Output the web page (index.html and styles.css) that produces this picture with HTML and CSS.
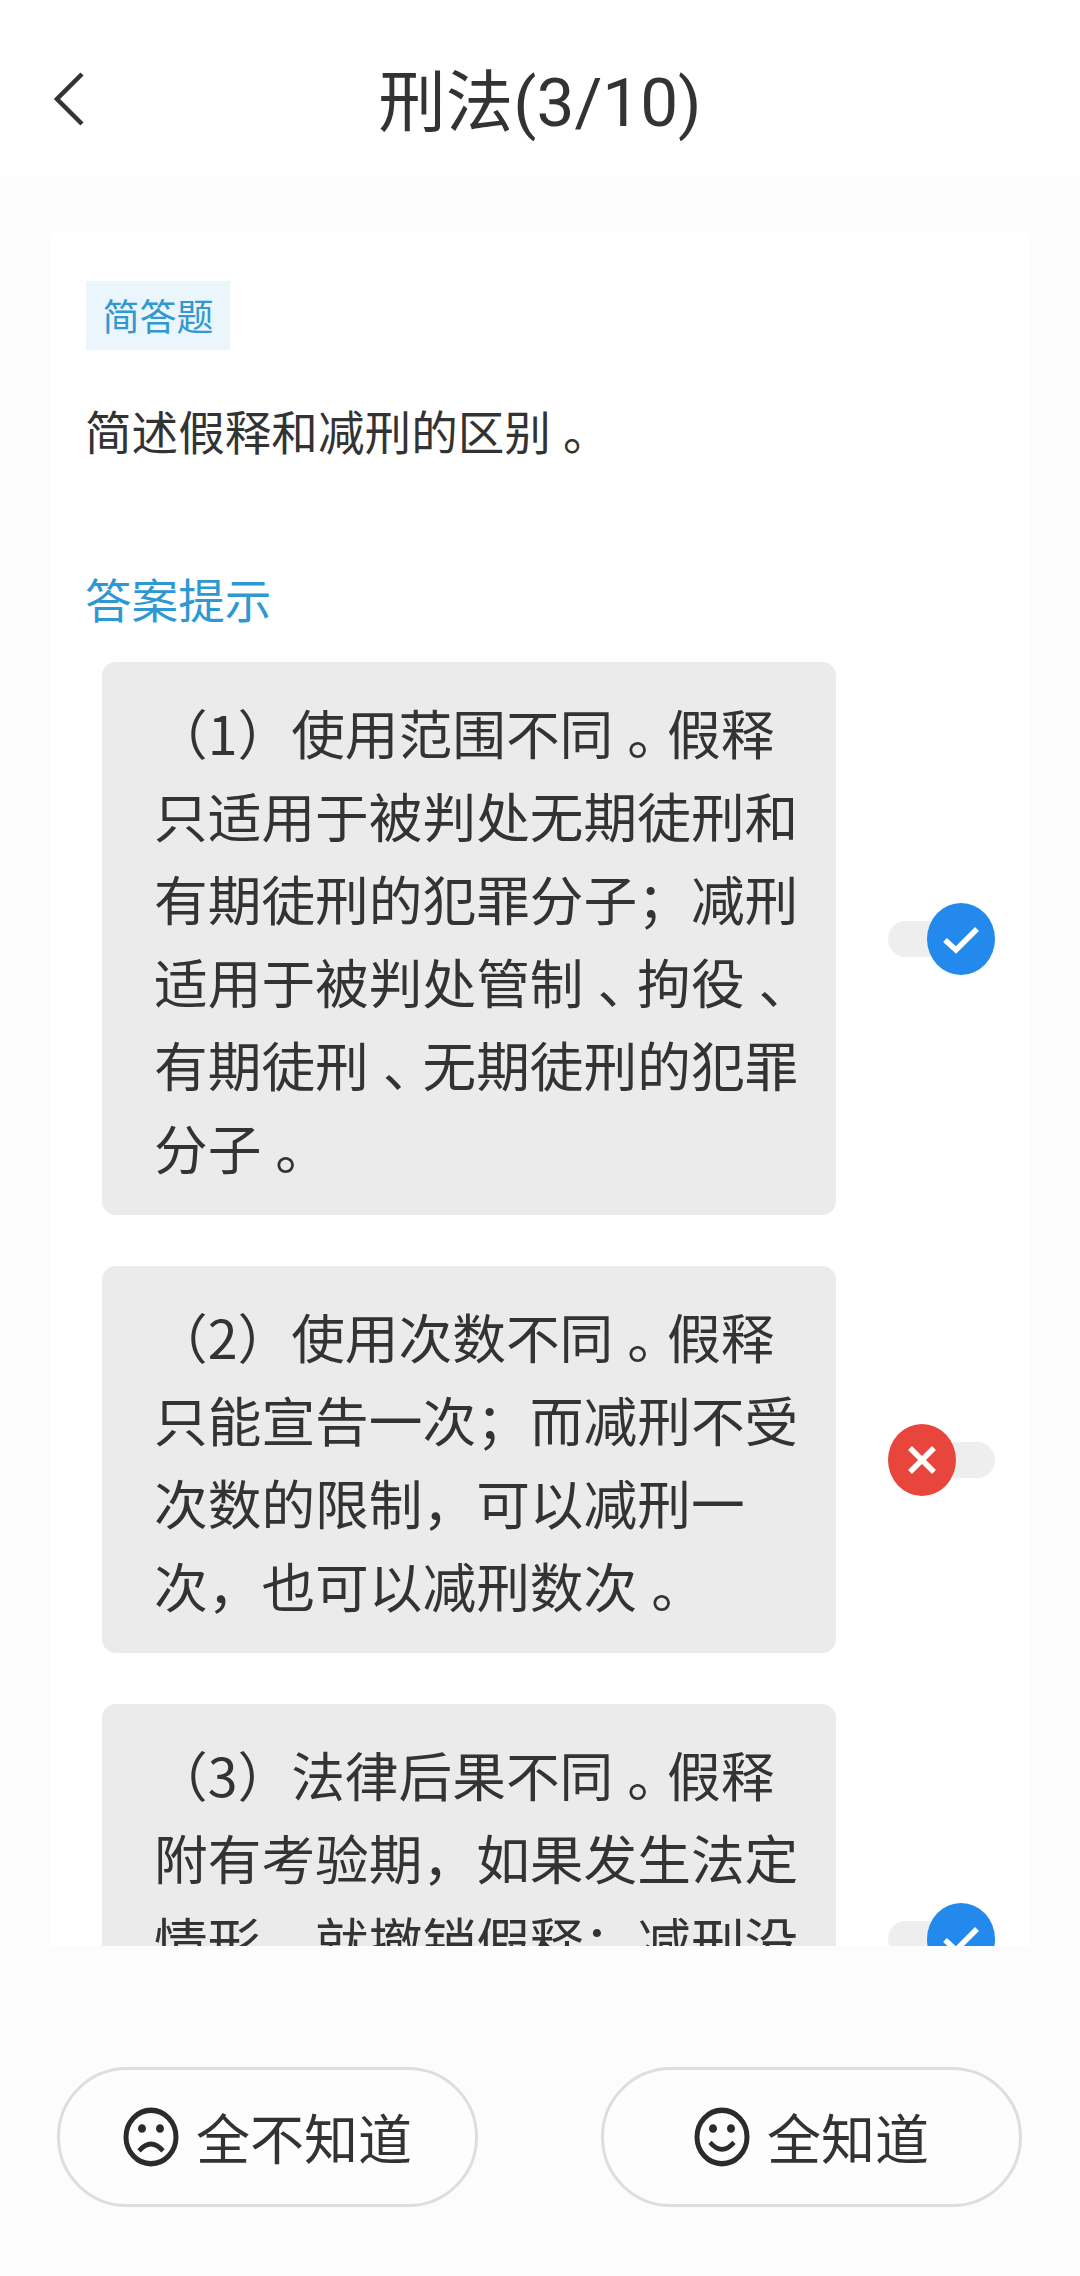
FILE: index.html
```html
<!DOCTYPE html>
<html lang="zh-CN">
<head>
<meta charset="utf-8">
<title>刑法(3/10)</title>
<link rel="stylesheet" href="styles.css">
</head>
<body>
<div class="page">
  <header class="topbar">
    <svg class="back" viewBox="0 0 30 54" aria-hidden="true"><path d="M28 2 L3 27 L28 52"/></svg>
    <h1 class="title">刑法(3/10)</h1>
  </header>
  <main class="scroll">
    <section class="card">
      <span class="tag">简答题</span>
      <p class="question">简述假释和减刑的区别<span class="mid">。</span></p>
      <h2 class="hint">答案提示</h2>
      <div class="row">
        <div class="block">（1）使用范围不同<span class="mid">。</span>假释只适用于被判处无期徒刑和有期徒刑的犯罪分子；减刑适用于被判处管制<span class="mid">、</span>拘役<span class="mid">、</span>有期徒刑<span class="mid">、</span>无期徒刑的犯罪分子<span class="mid">。</span></div>
        <div class="toggle">
          <span class="knob knob-on"><svg viewBox="0 0 40 40" aria-hidden="true"><path d="M4 21 L15 31 L36 10"/></svg></span>
        </div>
      </div>
      <div class="row">
        <div class="block">（2）使用次数不同<span class="mid">。</span>假释只能宣告一次；而减刑不受次数的限制，可以减刑一次，也可以减刑数次<span class="mid">。</span></div>
        <div class="toggle">
          <span class="knob knob-off"><svg viewBox="0 0 40 40" aria-hidden="true"><path d="M8 8 L32 32 M32 8 L8 32"/></svg></span>
        </div>
      </div>
      <div class="row">
        <div class="block">（3）法律后果不同<span class="mid">。</span>假释附有考验期，如果发生法定情形，就撤销假释；减刑没有考验期，减刑后不存在撤销减刑的问题<span class="mid">。</span></div>
        <div class="toggle">
          <span class="knob knob-on"><svg viewBox="0 0 40 40" aria-hidden="true"><path d="M4 21 L15 31 L36 10"/></svg></span>
        </div>
      </div>
    </section>
  </main>
  <footer class="actions">
    <button class="action" type="button">
      <svg class="face" viewBox="0 0 56 56" preserveAspectRatio="none" aria-hidden="true">
        <circle class="face-ring" cx="28" cy="28" r="25"/>
        <circle class="face-eye" cx="19" cy="20" r="4"/>
        <circle class="face-eye" cx="37" cy="20" r="4"/>
        <path class="face-mouth" d="M16 41 Q28 28 40 41"/>
      </svg>
      <span>全不知道</span>
    </button>
    <button class="action" type="button">
      <svg class="face" viewBox="0 0 56 56" preserveAspectRatio="none" aria-hidden="true">
        <circle class="face-ring" cx="28" cy="28" r="25"/>
        <circle class="face-eye" cx="19" cy="20" r="4"/>
        <circle class="face-eye" cx="37" cy="20" r="4"/>
        <path class="face-mouth" d="M16 33 Q28 46 40 33"/>
      </svg>
      <span>全知道</span>
    </button>
  </footer>
</div>
</body>
</html>
```

FILE: styles.css
```css
* { box-sizing: border-box; }
html, body { margin: 0; padding: 0; }
body {
  background: #fdfdfd;
  color: #333;
  font-family: "Noto Sans CJK SC", "Noto Sans", sans-serif;
}
.page {
  width: 1080px;
  height: 2276px;
  display: flex;
  flex-direction: column;
  overflow: hidden;
}
.topbar {
  position: relative;
  height: 177px;
  flex: none;
  background: #fff;
  display: flex;
  align-items: center;
  justify-content: center;
}
.back {
  position: absolute;
  left: 54px;
  top: 72px;
  width: 30px;
  height: 54px;
  fill: none;
  stroke: #333;
  stroke-width: 4.5;
}
.title {
  margin: 0;
  padding-top: 29px;
  font-family: Roboto, "Noto Sans CJK SC", sans-serif;
  font-size: 67.5px;
  font-weight: 400;
  line-height: 84px;
}
.scroll {
  flex: 1;
  min-height: 0;
  overflow: hidden;
  padding: 55px 50px 0;
}
.card {
  background: #fff;
  border-radius: 8px;
  padding: 49px 36px 40px 35px;
}
.tag {
  display: block;
  width: 144px;
  height: 69px;
  margin-left: 1px;
  background: #eaf5fc;
  color: #3199cf;
  font-size: 37px;
  line-height: 69px;
  text-align: center;
}
.question {
  margin: 41px 0 0;
  font-size: 46.6px;
  line-height: 78px;
}
.hint {
  margin: 90px 0 0;
  color: #2f98d3;
  font-size: 46.6px;
  font-weight: 400;
  line-height: 78px;
}
.mid {
  margin-left: 0.26em;
  letter-spacing: -0.26em;
}
.row {
  display: flex;
  align-items: center;
  gap: 52px;
  margin: 0 0 51px 17px;
}
.hint + .row { margin-top: 25px; }
.block {
  width: 734px;
  flex: none;
  background: #ebebeb;
  border-radius: 14px;
  padding: 28px 30px 27px 52px;
  font-size: 53.7px;
  line-height: 83px;
}
.toggle {
  position: relative;
  flex: none;
  width: 107px;
  height: 36px;
  background: #eeeeee;
  border-radius: 18px;
}
.knob {
  position: absolute;
  top: -18px;
  width: 68px;
  height: 72px;
  border-radius: 50%;
  display: flex;
  align-items: center;
  justify-content: center;
}
.knob svg {
  width: 40px;
  height: 40px;
  fill: none;
  stroke: #fff;
  stroke-width: 5.5;
}
.knob-on { right: 0; background: #2389ec; }
.knob-off { left: 0; background: #e8453c; }
.actions {
  flex: none;
  height: 330px;
  background: #fcfcfc;
  padding: 121px 58px 0 57px;
  display: flex;
  justify-content: space-between;
  align-items: flex-start;
}
.action {
  width: 421px;
  height: 140px;
  border: 3px solid #dedede;
  border-radius: 70px;
  background: #fdfdfd;
  color: #333;
  display: flex;
  align-items: center;
  justify-content: center;
  gap: 17px;
  font-family: inherit;
  font-size: 54px;
  line-height: 76px;
  padding: 0;
}
.face { width: 56px; height: 60px; flex: none; }
.face-ring { fill: none; stroke: #2b2b2b; stroke-width: 5; }
.face-eye { fill: #2b2b2b; }
.face-mouth { fill: none; stroke: #2b2b2b; stroke-width: 4.5; }
```
